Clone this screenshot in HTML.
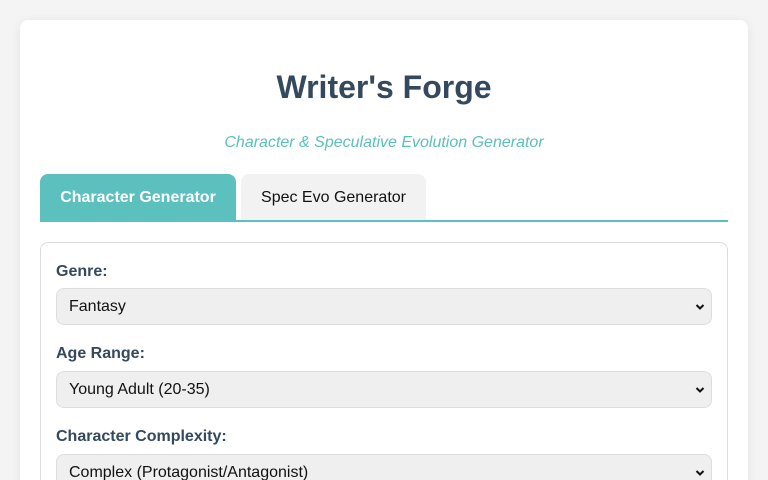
<!DOCTYPE html>
<html style="width:768px;height:480px;overflow:hidden"><head><style>
*{box-sizing:border-box;margin:0;padding:0}
body{width:768px;height:480px;overflow:hidden;background:#f4f4f4;font-family:"Liberation Sans",Arial,sans-serif;position:relative}
.card{position:absolute;left:20px;top:20px;width:728px;height:470px;background:#fff;border-radius:8px;box-shadow:0 2px 10px rgba(0,0,0,0.08)}
.t{position:absolute;left:0;width:768px;text-align:center}
.sub{top:133px;font-size:16px;font-style:italic;color:#5bbfba;line-height:20px}
.tab{position:absolute;top:174px;height:46px;border-radius:8px 8px 0 0;font-size:16px;line-height:46px;text-align:center;padding-top:1px}
.a{left:40px;width:196px;background:#5bc0be;color:#fff;font-weight:bold}
.b{left:241px;width:185px;background:#f2f2f2;color:#111}
.line{position:absolute;left:40px;top:220px;width:688px;height:2px;background:#5bc0be}
.panel{position:absolute;left:40px;top:242px;width:688px;height:250px;border:1px solid #ddd;border-radius:8px}
.lab{position:absolute;left:56px;font-size:16px;font-weight:bold;color:#34495e;line-height:20px}
.sel{position:absolute;left:56px;width:656px;height:37px;background:#efefef;border:1px solid #ddd;border-radius:8px;font-size:16px;color:#111;line-height:36px;padding-left:12px}
.sel svg{position:absolute;right:6px;top:14px}
</style></head><body>
<div class="card"></div>
<div class="t" style="top:68px;font-size:32px;font-weight:bold;color:#34495e;line-height:38px">Writer's Forge</div>
<div class="t sub">Character &amp; Speculative Evolution Generator</div>
<div class="tab a">Character Generator</div>
<div class="tab b">Spec Evo Generator</div>
<div class="line"></div>
<div class="panel"></div>
<div class="lab" style="top:262px">Genre:</div>
<div class="sel" style="top:288px">Fantasy<svg width="10" height="8" viewBox="0 0 10 8"><path d="M1.5 2L5 5.5 8.5 2" stroke="#111" stroke-width="2" fill="none"/></svg></div>
<div class="lab" style="top:344px">Age Range:</div>
<div class="sel" style="top:371px">Young Adult (20-35)<svg width="10" height="8" viewBox="0 0 10 8"><path d="M1.5 2L5 5.5 8.5 2" stroke="#111" stroke-width="2" fill="none"/></svg></div>
<div class="lab" style="top:427px">Character Complexity:</div>
<div class="sel" style="top:454px">Complex (Protagonist/Antagonist)<svg width="10" height="8" viewBox="0 0 10 8"><path d="M1.5 2L5 5.5 8.5 2" stroke="#111" stroke-width="2" fill="none"/></svg></div>
</body></html>
